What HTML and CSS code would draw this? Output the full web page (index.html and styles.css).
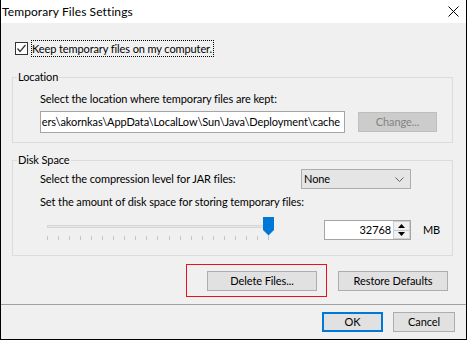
FILE: index.html
```html
<!DOCTYPE html>
<html lang="en">
<head>
<meta charset="utf-8">
<title>Temporary Files Settings</title>
<link rel="stylesheet" href="styles.css">
</head>
<body>
<div class="window">
  <div class="titlebar">
    <span class="title">Temporary Files Settings</span>
    <svg class="close" width="11" height="11" viewBox="0 0 11 11"><path d="M0.5 0.5 L10.5 10.5 M10.5 0.5 L0.5 10.5" stroke="#000" stroke-width="1" fill="none"/></svg>
  </div>
  <div class="body">
    <div class="check-row">
      <span class="checkbox"><svg width="11" height="11" viewBox="0 0 11 11"><path d="M1.5 5.5 L4 8.5 L9.5 2" stroke="#333" stroke-width="1.2" fill="none"/></svg></span>
      <span class="focus">Keep temporary files on my computer.</span>
    </div>

    <fieldset class="group">
      <legend class="legend">Location</legend>
      <div class="group-inner loc-inner">
        <div class="line">Select the location where temporary files are kept:</div>
        <div class="path-row">
          <div class="path-field"><span>ers\akornkas\AppData\LocalLow\Sun\Java\Deployment\cache</span></div>
          <div class="btn btn-disabled btn-change">Change...</div>
        </div>
      </div>
    </fieldset>

    <fieldset class="group group-disk">
      <legend class="legend">Disk Space</legend>
      <div class="group-inner disk-inner">
        <div class="combo-row">
          <span class="combo-label">Select the compression level for JAR files:</span>
          <div class="combo">
            <span>None</span>
            <svg width="9" height="5" viewBox="0 0 9 5"><path d="M0.5 0.5 L4.5 4.5 L8.5 0.5" stroke="#606060" fill="none"/></svg>
          </div>
        </div>
        <div class="line line-amount">Set the amount of disk space for storing temporary files:</div>
        <div class="slider-row">
          <div class="slider">
            <div class="track"></div>
            <div class="ticks">
              <i></i><i></i><i></i><i></i><i></i><i></i><i></i><i></i><i></i><i></i><i></i>
              <i></i><i></i><i></i><i></i><i></i><i></i><i></i><i></i><i></i><i></i>
            </div>
            <svg class="thumb" width="11" height="19" viewBox="0 0 11 19"><path d="M0 0 H11 V13 L5.5 18.5 L0 13 Z" fill="#0078d7"/></svg>
          </div>
          <div class="spinner">
            <span class="spin-value">32768</span>
            <span class="spin-btns">
              <span class="spin-up"><svg width="7" height="4" viewBox="0 0 7 4"><path d="M3.5 0 L7 4 H0 Z" fill="#000"/></svg></span>
              <span class="spin-down"><svg width="7" height="4" viewBox="0 0 7 4"><path d="M0 0 H7 L3.5 4 Z" fill="#000"/></svg></span>
            </span>
          </div>
          <span class="unit">MB</span>
        </div>
      </div>
    </fieldset>

    <div class="action-row">
      <div class="highlight"><div class="btn btn-delete">Delete Files...</div></div>
      <div class="btn btn-restore">Restore Defaults</div>
    </div>
  </div>
  <div class="footer">
    <div class="btn btn-default btn-ok">OK</div>
    <div class="btn btn-cancel">Cancel</div>
  </div>
</div>
</body>
</html>
```

FILE: styles.css
```css
* { box-sizing: border-box; }
html, body { margin: 0; padding: 0; }
body {
  font-family: "Segoe UI", Lato, "Noto Sans", sans-serif;
  font-size: 11px;
  letter-spacing: -0.1px;
  line-height: 16px;
  color: #000;
  background: #f0f0f0;
}
.window {
  width: 467px;
  height: 340px;
  background: #f0f0f0;
  border-left: 1px solid #000;
  border-right: 1px solid #000;
  border-bottom: 1px solid #000;
  display: flex;
  flex-direction: column;
}
.titlebar {
  height: 23px;
  background: #fff;
  display: flex;
  align-items: center;
  justify-content: space-between;
  padding: 0 7px 0 1px;
}
.title { font-size: 12px; letter-spacing: 0.1px; }
.close { display: block; }

.body {
  padding: 0 13px 0 11px;
}
.check-row {
  margin-top: 17px;
  height: 17px;
  display: flex;
  align-items: center;
  padding-left: 3px;
}
.checkbox {
  width: 13px;
  height: 13px;
  border: 1px solid #333;
  background: #fff;
  display: flex;
  align-items: center;
  justify-content: center;
}
.checkbox svg { display: block; }
.focus {
  margin-left: 3px;
  border: 1px dotted #000;
  padding: 0 1px 0 0;
  height: 17px;
  line-height: 15px;
}

.group {
  margin: 12px 0 0 0;
  padding: 0;
  border: 1px solid #dcdcdc;
  min-width: 0;
}
.group-disk { margin-top: 9px; }
.legend {
  margin-left: 4px;
  padding: 0 1px;
  line-height: 16px;
}
.group-inner {
  padding: 6px 0 9px 27px;
}
.disk-inner { padding: 0 0 15px 27px; }

.path-row {
  margin-top: 4px;
  display: flex;
  align-items: center;
}
.path-field {
  width: 305px;
  height: 22px;
  border: 1px solid #a5a5a5;
  background: #fff;
  padding: 0 4px 0 1px;
  line-height: 20px;
  white-space: nowrap;
  overflow: hidden;
  display: flex;
  justify-content: flex-end;
}
.btn {
  height: 20px;
  background: #e1e1e1;
  border: 1px solid #adadad;
  display: flex;
  align-items: center;
  justify-content: center;
  white-space: nowrap;
}
.btn-disabled {
  background: #cccccc;
  border-color: #bfbfbf;
  color: #838383;
}
.btn-change { width: 79px; margin-left: 13px; }

.combo-row {
  margin-top: 1px;
  display: flex;
  align-items: center;
  height: 20px;
}
.combo-label { width: 261px; }
.combo {
  width: 110px;
  height: 20px;
  background: #e5e5e5;
  border: 1px solid #adadad;
  display: flex;
  align-items: center;
  justify-content: space-between;
  padding: 0 6px 0 2px;
}
.combo svg { display: block; }
.line-amount { margin-top: 5px; }

.slider-row {
  margin-top: 7px;
  display: flex;
  align-items: flex-start;
}
.slider {
  position: relative;
  width: 284px;
  height: 23px;
  padding-left: 7px;
}
.track {
  margin-top: 8px;
  width: 223px;
  height: 3px;
  background: #e7e7e7;
  border: 1px solid #d6d6d6;
}
.ticks {
  margin-top: 8px;
  width: 222px;
  height: 4px;
  display: flex;
  justify-content: space-between;
}
.ticks i {
  display: block;
  width: 1px;
  height: 4px;
  background: #c4c4c4;
}
.thumb {
  position: absolute;
  left: 223px;
  top: 0;
  display: block;
}
.spinner {
  margin-top: 3px;
  width: 87px;
  height: 20px;
  border: 1px solid #a5a5a5;
  background: #fff;
  display: flex;
}
.spin-value {
  flex: 1;
  text-align: right;
  line-height: 18px;
  padding-right: 2px;
}
.spin-btns {
  width: 17px;
  display: flex;
  flex-direction: column;
  border: 1px solid #d0d0d0;
  background: #f0f0f0;
}
.spin-up, .spin-down {
  flex: 1;
  display: flex;
  align-items: center;
  justify-content: center;
}
.spin-up { border-bottom: 1px solid #c8c8c8; }
.spin-btns svg { display: block; }
.unit {
  margin-top: 5px;
  margin-left: 12px;
}

.action-row {
  margin-top: 8px;
  display: flex;
  align-items: center;
  justify-content: flex-end;
  padding-right: 5px;
}
.highlight {
  border: 1px solid #e81123;
  padding: 6px 9px 5px 20px;
}
.btn-delete { width: 110px; }
.btn-restore { width: 110px; margin-left: 11px; }

.footer {
  margin-top: auto;
  border-top: 1px solid #a0a0a0;
  height: 35px;
  display: flex;
  justify-content: flex-end;
  padding: 7px 11px 0 0;
}
.btn-ok { width: 61px; }
.btn-default { border: 2px solid #0078d7; }
.btn-cancel { width: 62px; margin-left: 10px; }
```
